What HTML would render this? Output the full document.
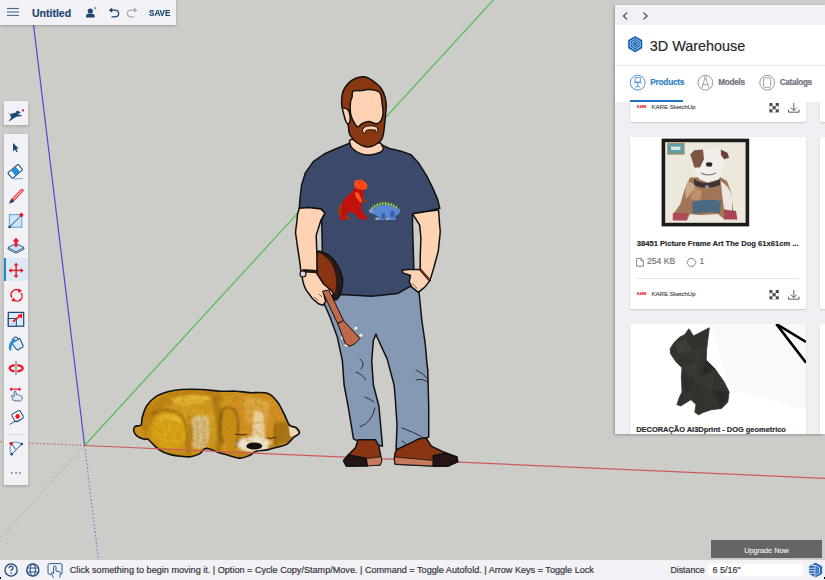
<!DOCTYPE html>
<html><head><meta charset="utf-8">
<style>
*{box-sizing:border-box;margin:0;padding:0}
html,body{width:825px;height:580px;overflow:hidden}
body{position:relative;background:#cccdc8;font-family:"Liberation Sans",sans-serif;color:#333}
.abs{position:absolute}
svg{position:absolute;overflow:visible}
.t{position:absolute;white-space:nowrap;line-height:1;-webkit-text-stroke:0.18px currentColor}
#scene{left:0;top:0}
#topbar{position:absolute;left:0;top:0;width:176px;height:25px;background:#f1f1f6;box-shadow:0 1px 3px rgba(0,0,0,.22)}
.tb{position:absolute;left:4px;width:24px;background:#f1f1f6;box-shadow:0 1px 3px rgba(0,0,0,.22)}
#panel{position:absolute;left:615px;top:5px;width:210px;height:429px;background:#efeff4;box-shadow:-1px 1px 3px rgba(0,0,0,.28);overflow:hidden}
#status{position:absolute;left:0;top:560px;width:825px;height:20px;background:#f1f1f6}
.card{position:absolute;background:#fff;box-shadow:0 1px 2px rgba(0,0,0,.16);border-radius:2px;overflow:hidden}
</style></head>
<body>
<!--SCENE-->
<svg id="scene" width="825" height="580" viewBox="0 0 825 580">
<line x1="30.5" y1="0" x2="84.6" y2="445.5" stroke="#4a4ad4" stroke-width="1.2"/>
<line x1="84.6" y1="445.5" x2="98.5" y2="560" stroke="#6a6ad6" stroke-width="0.95" stroke-dasharray="1.6 2"/>
<line x1="84.6" y1="445.5" x2="493.3" y2="0" stroke="#52bc4e" stroke-width="1.15"/>
<line x1="84.6" y1="445.5" x2="-20" y2="560" stroke="#72c06e" stroke-width="0.9" stroke-dasharray="1.6 2"/>
<line x1="84.6" y1="445.5" x2="0" y2="441.7" stroke="#c86060" stroke-width="1.1" stroke-dasharray="1.6 2"/>
<defs>
<radialGradient id="dg" cx="0.45" cy="0.45" r="0.7"><stop offset="0" stop-color="#d6a024"/><stop offset="0.65" stop-color="#cc9018"/><stop offset="1" stop-color="#a87010"/></radialGradient>
<radialGradient id="hg" cx="0.5" cy="0.4" r="0.6"><stop offset="0" stop-color="#dcaa48"/><stop offset="1" stop-color="#c48a1c"/></radialGradient>
<clipPath id="dogclip"><path d="M141.0 425.1 C142.2 423.6 141.3 420.5 142.3 417.3 C143.3 414.1 144.5 409.1 146.8 405.7 C149.1 402.2 152.2 399.0 155.9 396.6 C159.6 394.2 164.5 392.7 168.8 391.5 C173.1 390.3 176.3 389.8 181.7 389.5 C187.1 389.2 194.8 389.2 201.2 389.5 C207.6 389.8 214.2 390.9 220.0 391.2 C225.8 391.5 230.8 391.0 235.7 391.2 C240.6 391.4 244.2 392.2 249.5 392.6 C254.8 393.0 262.9 391.8 267.5 393.3 C272.1 394.8 274.4 398.2 277.2 401.6 C280.0 405.1 282.0 410.1 284.1 414.0 C286.2 417.9 287.5 422.8 289.6 425.1 C291.7 427.4 294.9 426.4 296.5 427.8 C298.1 429.2 299.8 431.7 299.3 433.3 C298.8 434.9 295.8 435.6 293.7 437.5 C291.6 439.4 289.6 442.8 286.8 444.4 C284.1 446.0 280.4 446.3 277.2 447.2 C274.0 448.1 271.0 449.2 267.5 449.9 C264.0 450.6 259.4 450.4 256.4 451.3 C253.4 452.2 252.2 454.2 249.5 455.4 C246.8 456.5 243.3 458.2 239.9 458.2 C236.5 458.2 232.3 456.3 228.8 455.4 C225.3 454.5 222.8 453.9 219.1 452.7 C215.3 451.5 209.5 448.2 206.3 448.4 C203.1 448.5 202.5 452.2 199.9 453.6 C197.3 455.0 194.0 456.4 190.8 456.8 C187.6 457.2 183.7 456.5 180.5 456.2 C177.3 455.9 174.2 455.5 171.4 454.9 C168.6 454.2 166.2 453.6 163.6 452.3 C161.0 451.0 158.5 449.3 155.9 447.1 C153.3 444.9 150.1 440.6 148.1 439.3 C146.1 438.0 145.9 439.7 144.2 439.3 C142.5 438.9 139.5 438.0 137.8 436.7 C136.1 435.4 134.3 433.3 133.9 431.6 C133.5 429.9 134.0 427.5 135.2 426.4 C136.4 425.3 139.8 426.6 141.0 425.1 Z"/></clipPath>
</defs>
<path d="M141.0 425.1 C142.2 423.6 141.3 420.5 142.3 417.3 C143.3 414.1 144.5 409.1 146.8 405.7 C149.1 402.2 152.2 399.0 155.9 396.6 C159.6 394.2 164.5 392.7 168.8 391.5 C173.1 390.3 176.3 389.8 181.7 389.5 C187.1 389.2 194.8 389.2 201.2 389.5 C207.6 389.8 214.2 390.9 220.0 391.2 C225.8 391.5 230.8 391.0 235.7 391.2 C240.6 391.4 244.2 392.2 249.5 392.6 C254.8 393.0 262.9 391.8 267.5 393.3 C272.1 394.8 274.4 398.2 277.2 401.6 C280.0 405.1 282.0 410.1 284.1 414.0 C286.2 417.9 287.5 422.8 289.6 425.1 C291.7 427.4 294.9 426.4 296.5 427.8 C298.1 429.2 299.8 431.7 299.3 433.3 C298.8 434.9 295.8 435.6 293.7 437.5 C291.6 439.4 289.6 442.8 286.8 444.4 C284.1 446.0 280.4 446.3 277.2 447.2 C274.0 448.1 271.0 449.2 267.5 449.9 C264.0 450.6 259.4 450.4 256.4 451.3 C253.4 452.2 252.2 454.2 249.5 455.4 C246.8 456.5 243.3 458.2 239.9 458.2 C236.5 458.2 232.3 456.3 228.8 455.4 C225.3 454.5 222.8 453.9 219.1 452.7 C215.3 451.5 209.5 448.2 206.3 448.4 C203.1 448.5 202.5 452.2 199.9 453.6 C197.3 455.0 194.0 456.4 190.8 456.8 C187.6 457.2 183.7 456.5 180.5 456.2 C177.3 455.9 174.2 455.5 171.4 454.9 C168.6 454.2 166.2 453.6 163.6 452.3 C161.0 451.0 158.5 449.3 155.9 447.1 C153.3 444.9 150.1 440.6 148.1 439.3 C146.1 438.0 145.9 439.7 144.2 439.3 C142.5 438.9 139.5 438.0 137.8 436.7 C136.1 435.4 134.3 433.3 133.9 431.6 C133.5 429.9 134.0 427.5 135.2 426.4 C136.4 425.3 139.8 426.6 141.0 425.1 Z" fill="url(#dg)"/>
<filter id="bl" x="-20%" y="-20%" width="140%" height="140%"><feGaussianBlur stdDeviation="1.3"/></filter>
<filter id="bl2" x="-20%" y="-20%" width="140%" height="140%"><feGaussianBlur stdDeviation="0.6"/></filter>
<filter id="fur" x="0" y="0" width="100%" height="100%"><feTurbulence type="fractalNoise" baseFrequency="0.22 0.28" numOctaves="3" seed="11"/><feColorMatrix type="matrix" values="0 0 0 0 0.42  0 0 0 0 0.24  0 0 0 0 0.0  0 0 0 -3 1.6"/><feComposite in2="SourceGraphic" operator="in"/></filter>
<filter id="fur2" x="0" y="0" width="100%" height="100%"><feTurbulence type="fractalNoise" baseFrequency="0.25 0.2" numOctaves="2" seed="5"/><feColorMatrix type="matrix" values="0 0 0 0 0.95  0 0 0 0 0.8  0 0 0 0 0.35  0 0 0 3 -1.7"/><feComposite in2="SourceGraphic" operator="in"/></filter>
<g clip-path="url(#dogclip)">
<g filter="url(#bl)">
<path d="M138 420 Q150 398 180 390 Q205 388 222 392 L224 402 Q196 396 170 404 Q150 414 146 440 Z" fill="#b87a0c" opacity="0.75"/>
<path d="M170 398 Q196 392 214 398 Q200 406 176 406 Z" fill="#e4b436" opacity="0.8"/>
<ellipse cx="170" cy="431" rx="18" ry="18" fill="#d8a214"/>
<path d="M160 420 Q170 414 180 422" fill="none" stroke="#eec040" stroke-width="3" opacity="0.7"/>
<path d="M187 416 Q192 436 185 453 L190 455 Q196 436 191 416 Z" fill="#9a640a" opacity="0.5"/>
<path d="M191 420 Q199 412 208 417 Q212 432 207 447 Q198 452 192 446 Q195 432 191 420 Z" fill="#dcc494" opacity="0.85"/>
<path d="M196 420 Q199 432 197 446 M203 418 Q206 432 203 446" fill="none" stroke="#b48a58" stroke-width="1.2" opacity="0.8"/>
<path d="M210 398 Q219 422 215 454 L221 455 Q224 420 219 396 Z" fill="#7a5008" opacity="0.4"/>
<path d="M232 394 Q258 388 278 402 Q290 420 289 440 Q270 452 248 452 Q232 448 230 425 Z" fill="#d08e22"/>
<path d="M244 398 Q260 396 270 404 L266 432 Q258 420 246 424 Z" fill="#dca84a" opacity="0.8"/>
<path d="M254 412 Q259 409 263 414 L265 438 L252 438 Z" fill="#ead0a0"/>
<ellipse cx="254" cy="444.5" rx="18" ry="7.5" fill="#eee2cc"/>
<path d="M221.5 411 Q231 405 236 414 Q238 432 235 448 Q226 449 222 441 Q219 424 221.5 411 Z" fill="#c98c14"/>
<path d="M222 412 Q219 430 223 444" fill="none" stroke="#6a4208" stroke-width="1.6" opacity="0.6"/>
<path d="M276 423 Q288 419 296 428 Q299 438 292 445 Q282 449 276 448 Q272 434 276 423 Z" fill="#a87014"/>
<path d="M268 444 L286 441 L286 448 L268 450 Z" fill="#b88420" opacity="0.8"/>
</g>
<filter id="bl3" x="-20%" y="-20%" width="140%" height="140%"><feGaussianBlur stdDeviation="0.9"/></filter>
<g filter="url(#bl3)" fill="none" stroke-linecap="round">
<path d="M152 414 Q166 406 180 414 Q190 426 186 446" stroke="#7a4c08" stroke-width="1.8" opacity="0.7"/>
<path d="M158 418 Q170 412 180 420" stroke="#f2c848" stroke-width="2" opacity="0.6"/>
<path d="M221 410 Q231 403 237 414 Q240 432 236 448" stroke="#5e3c06" stroke-width="1.8" opacity="0.7"/>
<path d="M222 411 Q218 426 221 442" stroke="#5e3c06" stroke-width="1.6" opacity="0.6"/>
<path d="M276 422 Q273 436 277 448" stroke="#6a4406" stroke-width="1.6" opacity="0.6"/>
<path d="M176 400 Q196 394 212 400" stroke="#f0c448" stroke-width="2.4" opacity="0.55"/>
<path d="M244 404 Q256 398 270 406" stroke="#e8b860" stroke-width="2" opacity="0.6"/>
</g>
<rect x="130" y="385" width="175" height="80" filter="url(#fur)" opacity="0.4"/>
<rect x="130" y="385" width="175" height="80" filter="url(#fur2)" opacity="0.18"/>
<g filter="url(#bl2)">
<path d="M288.5 426 Q296 427 298.6 433 Q296 437 290 436.5 Z" fill="#e8d8b8"/>
<ellipse cx="254.3" cy="446" rx="8" ry="3.6" fill="#141010"/>
</g>
<path d="M235 434.2 Q241 435.8 247 434.2" fill="none" stroke="#3a2808" stroke-width="1"/>
<path d="M266.6 437.8 Q271 439 275.6 437.4" fill="none" stroke="#3a2808" stroke-width="1"/>
</g>
<path d="M141.0 425.1 C142.2 423.6 141.3 420.5 142.3 417.3 C143.3 414.1 144.5 409.1 146.8 405.7 C149.1 402.2 152.2 399.0 155.9 396.6 C159.6 394.2 164.5 392.7 168.8 391.5 C173.1 390.3 176.3 389.8 181.7 389.5 C187.1 389.2 194.8 389.2 201.2 389.5 C207.6 389.8 214.2 390.9 220.0 391.2 C225.8 391.5 230.8 391.0 235.7 391.2 C240.6 391.4 244.2 392.2 249.5 392.6 C254.8 393.0 262.9 391.8 267.5 393.3 C272.1 394.8 274.4 398.2 277.2 401.6 C280.0 405.1 282.0 410.1 284.1 414.0 C286.2 417.9 287.5 422.8 289.6 425.1 C291.7 427.4 294.9 426.4 296.5 427.8 C298.1 429.2 299.8 431.7 299.3 433.3 C298.8 434.9 295.8 435.6 293.7 437.5 C291.6 439.4 289.6 442.8 286.8 444.4 C284.1 446.0 280.4 446.3 277.2 447.2 C274.0 448.1 271.0 449.2 267.5 449.9 C264.0 450.6 259.4 450.4 256.4 451.3 C253.4 452.2 252.2 454.2 249.5 455.4 C246.8 456.5 243.3 458.2 239.9 458.2 C236.5 458.2 232.3 456.3 228.8 455.4 C225.3 454.5 222.8 453.9 219.1 452.7 C215.3 451.5 209.5 448.2 206.3 448.4 C203.1 448.5 202.5 452.2 199.9 453.6 C197.3 455.0 194.0 456.4 190.8 456.8 C187.6 457.2 183.7 456.5 180.5 456.2 C177.3 455.9 174.2 455.5 171.4 454.9 C168.6 454.2 166.2 453.6 163.6 452.3 C161.0 451.0 158.5 449.3 155.9 447.1 C153.3 444.9 150.1 440.6 148.1 439.3 C146.1 438.0 145.9 439.7 144.2 439.3 C142.5 438.9 139.5 438.0 137.8 436.7 C136.1 435.4 134.3 433.3 133.9 431.6 C133.5 429.9 134.0 427.5 135.2 426.4 C136.4 425.3 139.8 426.6 141.0 425.1 Z" fill="none" stroke="#111" stroke-width="1.6" stroke-linejoin="round"/>
<line x1="84.6" y1="445.5" x2="825" y2="478.4" stroke="#cc5c5c" stroke-width="1.2"/>
<path d="M322.8 300.5 L330.3 317.8 L337.2 336.7 L342.4 360.9 L344.1 385.0 L348.1 406.2 L353.5 438.8 L360.0 442.0 L382.5 446.0 L378.9 406.2 L373.4 385.0 L371.7 360.9 L373.4 340.2 L376.0 334.1 L376.9 336.7 L387.2 359.1 L394.1 385.0 L395.2 397.2 L397.0 424.3 L396.1 449.7 L428.7 437.0 L428.7 406.2 L427.8 370.0 L426.9 362.6 L425.2 343.6 L421.7 319.5 L419.1 292.8 L418.0 286.0 L360.0 286.0 Z" fill="#8599b5" stroke="#111" stroke-width="1.5" stroke-linejoin="round"/>
<g fill="none" stroke="#111" stroke-width="0.8" stroke-linecap="round"><path d="M360 359 Q366 364 361 369"/><path d="M356 372 Q362 374 366 380"/><path d="M416 370 Q423 373 428 379"/><path d="M416 380 Q422 378 428 382"/><path d="M375 408 Q372 422 360 427"/><path d="M402 428 Q414 432 424 438"/><path d="M402 441 Q408 444 406 448"/><path d="M365 397 Q370 399 374 402"/></g>
<path d="M358.1 439.7 L375.3 439.7 L378.9 446.1 L381.6 460.6 L379.8 465.1 L346.3 466.0 L343.6 460.6 L348.1 455.1 L355.4 447.9 Z" fill="#8a3511" stroke="#111" stroke-width="1.5" stroke-linejoin="round"/>
<path d="M366.2 458.6 L381.4 456.8 L381.6 462.0 L379.8 465.1 L367.1 466.0 Z" fill="#c77a5c" stroke="#111" stroke-width="0.8"/>
<path d="M343.6 460.6 L348.1 455.1 L357.0 456.6 L366.2 458.6 L367.1 466.0 L346.3 466.0 Z" fill="#261516" stroke="#111" stroke-width="1.5" stroke-linejoin="round"/>
<path d="M397.0 449.7 L418.8 438.8 L426.0 437.9 L431.4 446.1 L442.3 451.5 L456.8 457.0 L457.7 461.5 L447.8 466.0 L433.3 466.0 L395.2 464.2 L394.3 458.8 L395.2 452.4 Z" fill="#8a3511" stroke="#111" stroke-width="1.5" stroke-linejoin="round"/>
<path d="M394.3 457.0 L433.3 460.4 L433.3 466.0 L395.2 464.2 Z" fill="#c77a5c" stroke="#111" stroke-width="0.8"/>
<path d="M433.3 455.4 L445.0 453.6 L456.8 457.0 L457.7 461.5 L447.8 466.0 L433.3 466.0 Z" fill="#261516" stroke="#111" stroke-width="1.5" stroke-linejoin="round"/>
<path d="M350.1 143.0 L343.6 145.6 L336.6 148.5 L324.2 154.0 L313.3 161.7 L305.5 172.6 L301.6 185.0 L300.1 197.5 L299.3 208.3 L308.6 207.5 L321.0 209.1 L324.9 213.0 L321.7 220.0 L322.4 253.0 L325.0 290.0 L334.5 295.7 L340.7 294.5 L371.7 296.2 L397.6 293.6 L407.9 287.6 L411.8 286.0 L413.8 267.7 L413.1 244.4 L412.5 225.0 L412.6 213.8 L426.6 211.4 L439.8 208.3 L437.5 199.0 L432.8 188.1 L426.6 175.7 L418.8 163.3 L411.1 154.8 L400.2 150.9 L389.3 148.5 L383.3 145.6 L379.8 143.0 Z" fill="#3b4a6b" stroke="#111" stroke-width="1.5" stroke-linejoin="round"/>
<path d="M342.5 201.4 L339.1 206.5 L337.8 211.6 L339.9 216.7 L345 218.8 L351.8 220.1 L347.6 215.9 L343.3 213.3 L341.6 208.2 Z" fill="#a43a0c"/>
<path d="M354.4 187.9 L362.8 188.7 L363.7 193 L363.3 198.1 L362 204 L361.1 209.9 L363.7 213.3 L367.1 217.6 L367.1 219.7 L359.4 219.3 L355.2 214.2 L350.1 211.6 L346.7 214.2 L345 220.1 L339.9 220.5 L341.6 209.9 L342.5 201.4 L346.7 196.4 L351.8 192.1 Z" fill="#c0120a"/>
<path d="M355.2 180.7 L361.1 179.8 L365.4 182.4 L367.1 185.3 L366.7 188.7 L362 189.6 L355.6 187.9 L354.4 184.5 Z" fill="#ff4a12" stroke="#ff4a12" stroke-width="0.6" stroke-linejoin="round"/>
<circle cx="359.4" cy="182.8" r="0.6" fill="#8a1a08"/>
<path d="M354.8 192.1 L358.6 193 L362 200.6 L361.6 203.1 L359.4 201.4 L355.6 196.4 Z" fill="#ff5a1a"/>
<path d="M363.3 198.9 L366.2 200.6 L367.5 202.3 L366.2 202.7 L363.7 201 Z" fill="#a43a0c"/>
<path d="M369.6 209.9 L374.7 205.7 L384.9 203.6 L393.4 205.3 L397.2 208.7 L399.3 208.7 L399.7 207.4 L400.2 211.6 L397.6 215 L395.1 215.9 L395.9 220.1 L389.1 220.1 L388.3 216.7 L384.9 217.6 L384 220.1 L379.8 220.1 L379 216.7 L373.9 214.2 L369.6 212.5 Z" fill="#5a86d6"/>
<path d="M370.5 209.4 L372.2 205.4 L373.9 209.4 Z" fill="#4a8a3a"/><path d="M371.3 208.8 L372.2 206.6 L373.1 208.8 Z" fill="#e8e850"/><path d="M372.9 207.6 L374.6 203.6 L376.3 207.6 Z" fill="#4a8a3a"/><path d="M373.7 207.0 L374.6 204.8 L375.5 207.0 Z" fill="#e8e850"/><path d="M375.5 206.2 L377.2 202.2 L378.9 206.2 Z" fill="#4a8a3a"/><path d="M376.3 205.6 L377.2 203.4 L378.1 205.6 Z" fill="#e8e850"/><path d="M378.3 205.3 L380.0 201.3 L381.7 205.3 Z" fill="#4a8a3a"/><path d="M379.1 204.7 L380.0 202.5 L380.9 204.7 Z" fill="#e8e850"/><path d="M381.1 204.7 L382.8 200.7 L384.5 204.7 Z" fill="#4a8a3a"/><path d="M381.9 204.1 L382.8 201.9 L383.7 204.1 Z" fill="#e8e850"/><path d="M383.9 204.6 L385.6 200.6 L387.3 204.6 Z" fill="#4a8a3a"/><path d="M384.7 204.0 L385.6 201.8 L386.5 204.0 Z" fill="#e8e850"/><path d="M386.7 205.0 L388.4 201.0 L390.1 205.0 Z" fill="#4a8a3a"/><path d="M387.5 204.4 L388.4 202.2 L389.3 204.4 Z" fill="#e8e850"/><path d="M389.5 205.8 L391.2 201.8 L392.9 205.8 Z" fill="#4a8a3a"/><path d="M390.3 205.2 L391.2 203.0 L392.1 205.2 Z" fill="#e8e850"/><path d="M392.1 207.0 L393.8 203.0 L395.5 207.0 Z" fill="#4a8a3a"/><path d="M392.9 206.4 L393.8 204.2 L394.7 206.4 Z" fill="#e8e850"/><path d="M394.5 208.8 L396.2 204.8 L397.9 208.8 Z" fill="#4a8a3a"/><path d="M395.3 208.2 L396.2 206.0 L397.1 208.2 Z" fill="#e8e850"/>
<ellipse cx="392.5" cy="214" rx="2.2" ry="3.6" fill="#3d62a8"/><ellipse cx="383.2" cy="216" rx="2" ry="3" fill="#3d62a8"/>
<path d="M375.6 217.6 L379 217.6 L379.4 220.1 L375.2 220.1 Z M385.7 217.6 L389.1 217.6 L389.5 220.1 L385.3 220.1 Z" fill="#98a6c0"/>
<path d="M368.8 209.6 L372.4 208.8 L373.9 212.5 L369.2 212.6 Z" fill="#8a9cc0"/>
<path d="M323.1 252.4 C325.5 253.1 328.5 254.7 331.0 257.0 C333.5 259.3 336.1 262.5 338.0 266.0 C339.9 269.5 341.8 274.2 342.4 277.9 C343.0 281.6 342.7 284.5 341.9 288.0 C341.1 291.5 339.3 296.9 337.5 298.7 C335.7 300.5 333.6 300.4 331.0 299.0 C328.4 297.6 324.3 293.8 322.0 290.0 C319.7 286.2 317.9 282.1 317.0 276.0 C316.1 269.9 315.9 257.0 316.9 253.1 C317.9 249.2 320.8 251.8 323.1 252.4 Z" fill="#2b1a17" stroke="#111" stroke-width="1.5" stroke-linejoin="round"/>
<path d="M318.0 253.5 C319.6 251.6 324.5 256.2 327.0 258.5 C329.5 260.8 331.5 263.6 333.0 267.0 C334.5 270.4 335.7 274.8 336.0 279.0 C336.3 283.2 336.0 289.5 335.0 292.0 C334.0 294.5 332.3 295.3 330.0 294.0 C327.7 292.7 323.1 288.0 321.0 284.0 C318.9 280.0 318.0 275.1 317.5 270.0 C317.0 264.9 316.4 255.4 318.0 253.5 Z" fill="#8a3511"/>
<path d="M299.3 208.3 L297.5 214.0 L297.0 220.0 L295.5 232.4 L297.6 247.6 L299.7 261.4 L301.0 272.4 L303.8 284.8 L306.0 289.9 L312.6 298.7 L318.4 303.8 L322.8 305.3 L325.7 301.6 L323.6 293.0 L328.7 294.8 L333.8 296.0 L332.3 291.4 L323.6 284.0 L317.0 273.8 L316.9 254.5 L316.2 235.2 L321.0 220.0 L324.9 213.0 L321.0 209.1 L308.6 207.5 Z" fill="#fdd3b3" stroke="#111" stroke-width="1.5" stroke-linejoin="round"/>
<path d="M303.5 270.8 L316.6 271.6" stroke="#241716" stroke-width="3.4" stroke-linecap="round"/>
<circle cx="303" cy="274" r="3" fill="#d8d8d8" stroke="#1a1a1a" stroke-width="1.2"/>
<path d="M314 297 L318.5 301 M319 294 L322 297" stroke="#111" stroke-width="0.6" fill="none"/>
<path d="M322.4 291.2 L328.8 290.0 L343.6 320.6 L337.6 323.6 Z" fill="#c0684a" stroke="#111" stroke-width="1"/>
<circle cx="355.8" cy="328.2" r="2.2" fill="#e8e8e8" stroke="#666" stroke-width="0.6"/>
<circle cx="361" cy="335.2" r="2.2" fill="#e8e8e8" stroke="#666" stroke-width="0.6"/>
<circle cx="342.4" cy="337.8" r="2.2" fill="#e8e8e8" stroke="#666" stroke-width="0.6"/>
<circle cx="346.2" cy="345" r="2.2" fill="#e8e8e8" stroke="#666" stroke-width="0.6"/>
<path d="M337.6 323.6 L343.6 320.6 L360.0 338.6 L355.0 343.6 L350.0 346.2 L345.4 343.6 Z" fill="#c0684a" stroke="#111" stroke-width="1"/>
<path d="M412.6 213.8 L419.6 225.0 L420.9 237.9 L420.2 257.3 L420.2 269.4 L407.9 269.4 L402.1 270.3 L402.8 272.9 L410.5 275.5 L409.2 281.9 L411.8 287.1 L418.3 292.3 L424.8 287.1 L429.9 280.6 L433.8 267.7 L438.3 250.9 L440.3 231.5 L439.6 225.0 L438.6 210.0 L426.6 211.4 Z" fill="#fdd3b3" stroke="#111" stroke-width="1.5" stroke-linejoin="round"/>
<path d="M420.4 269.8 L429.6 280.2" stroke="#111" stroke-width="2.4" stroke-linecap="round"/><path d="M420.6 269.9 L429.4 280" stroke="#9a1c1c" stroke-width="1.2" stroke-linecap="round"/>
<path d="M415 286 L417 288.5 M412.5 283.5 L414.5 286" stroke="#111" stroke-width="0.6" fill="none"/>
<path d="M351.4 139.6 C348.1 140.1 350.0 142.5 350.1 143.9 C350.2 145.3 350.6 146.6 352.2 148.2 C353.8 149.8 357.1 152.2 360.0 153.4 C362.9 154.6 366.2 155.2 369.5 155.1 C372.8 154.9 377.5 153.5 379.8 152.5 C382.1 151.5 383.0 150.4 383.3 149.1 C383.6 147.8 382.2 145.8 381.6 144.8 C381.0 143.8 381.7 143.6 379.8 143.0 C377.9 142.4 374.7 141.6 370.0 141.0 C365.3 140.4 354.7 139.1 351.4 139.6 Z" fill="#fdd3b3" stroke="#111" stroke-width="1.5" stroke-linejoin="round"/>
<path d="M364.0 76.7 C366.8 77.0 369.4 78.5 372.2 80.3 C374.9 82.1 378.4 84.9 380.5 87.5 C382.6 90.1 383.7 93.0 384.6 95.8 C385.6 98.6 386.0 101.2 386.2 104.1 C386.4 107.0 385.9 110.7 385.7 113.4 C385.5 116.2 385.3 118.0 385.0 120.6 C384.7 123.2 384.5 126.3 384.1 129.2 C383.7 132.1 383.4 135.6 382.4 137.9 C381.4 140.2 380.0 141.6 378.1 143.0 C376.2 144.4 373.5 145.9 371.2 146.5 C368.9 147.1 366.6 147.1 364.3 146.5 C362.0 145.9 359.4 144.4 357.4 143.0 C355.4 141.6 353.6 139.6 352.2 137.9 C350.8 136.2 349.9 135.0 349.2 132.7 C348.5 130.4 349.1 128.2 347.9 124.1 C346.7 120.0 343.2 112.4 342.2 108.2 C341.2 104.0 341.5 101.8 341.7 98.9 C341.9 96.0 342.2 93.2 343.3 90.6 C344.4 88.0 346.3 85.5 348.4 83.4 C350.5 81.3 353.1 79.3 355.7 78.2 C358.3 77.1 361.2 76.4 364.0 76.7 Z" fill="#8a3811" stroke="#111" stroke-width="1.5" stroke-linejoin="round"/>
<path d="M342.8 108.2 C342.1 109.1 343.7 113.8 344.2 116.0 C344.7 118.2 345.3 120.2 346.0 121.5 C346.7 122.8 347.9 124.4 348.6 124.0 C349.3 123.6 350.2 121.2 350.2 119.0 C350.2 116.8 349.7 112.3 348.5 110.5 C347.3 108.7 343.5 107.3 342.8 108.2 Z" fill="#fdd3b3" stroke="#111" stroke-width="1.5" stroke-linejoin="round"/>
<path d="M353.1 91.1 C354.6 90.1 358.4 90.8 360.9 90.6 C363.4 90.3 365.5 89.6 368.1 89.6 C370.7 89.6 374.3 89.9 376.4 90.6 C378.5 91.3 379.6 91.6 380.5 93.7 C381.4 95.8 381.7 99.7 382.1 103.0 C382.5 106.3 383.3 110.5 383.1 113.4 C382.9 116.3 382.1 118.9 381.0 120.6 C379.9 122.3 378.4 123.5 376.4 123.7 C374.4 123.9 371.5 121.6 369.1 121.6 C366.7 121.6 363.8 122.8 361.9 123.7 C360.0 124.6 359.2 127.2 357.8 126.8 C356.4 126.4 354.8 123.8 353.6 121.6 C352.4 119.4 351.0 116.7 350.5 113.4 C350.0 110.1 350.2 104.8 350.5 102.0 C350.8 99.2 351.7 98.6 352.1 96.8 C352.5 95.0 351.6 92.1 353.1 91.1 Z" fill="#fdd3b3" stroke="#111" stroke-width="1.5" stroke-linejoin="round"/>
<path d="M362.6 129.2 L366.0 126.2 L372.1 125.8 L377.2 127.1 L378.1 131.8 L376.4 132.7 L375.5 130.1 L369.5 129.7 L366.0 130.5 L364.7 133.6 L362.6 131.8 Z" fill="#fdd3b3" stroke="#111" stroke-width="1" stroke-linejoin="round"/>
</svg>
<!--/SCENE-->

<!--TOPBAR-->
<div id="topbar">
  <svg width="176" height="25" style="left:0;top:0">
    <g stroke="#4d6b8c" stroke-width="1.1">
      <line x1="7" y1="8.5" x2="19" y2="8.5"/><line x1="7" y1="12" x2="19" y2="12"/><line x1="7" y1="15.4" x2="19" y2="15.4"/>
    </g>
    <circle cx="90.3" cy="11" r="2.6" fill="#1b4573"/>
    <path d="M86 17.6 V15.8 Q86 13.8 88.5 13.8 H92.2 Q94.6 13.8 94.6 15.8 V17.6 Z" fill="#1b4573"/>
    <circle cx="95.2" cy="8.2" r="1.1" fill="#3aa6e6"/>
    <path d="M110.5 10.2 H114.5 Q118.7 10.2 118.7 13.5 Q118.7 16.8 114.5 16.8 H111.5" fill="none" stroke="#1b4573" stroke-width="1.2"/>
    <path d="M108.8 10.2 L112.2 7.6 L112.2 12.8 Z" fill="#1b4573"/>
    <path d="M135.5 10.2 H131.5 Q127.4 10.2 127.4 13.5 Q127.4 16.8 131.5 16.8 H134.5" fill="none" stroke="#a9adb8" stroke-width="1.2"/>
    <path d="M137.4 10.2 L134 7.6 L134 12.8 Z" fill="#a9adb8"/>
  </svg>
  <div class="t navy" style="left:32px;top:7.5px;font-size:10.5px;font-weight:bold;color:#1b4573">Untitled</div>
  <div class="t" style="left:149px;top:7.9px;font-size:9.5px;font-weight:bold;color:#1b4573;transform:scaleX(0.85);transform-origin:0 0">SAVE</div>
</div>
<!--/TOPBAR-->

<!--LEFTTOOLS-->
<div class="tb" style="top:101px;height:24px"></div>
<div class="tb" style="top:134px;height:351px"></div>
<div class="abs" style="left:4px;top:258px;width:24px;height:23px;background:#dce8f4"></div>
<div class="abs" style="left:4px;top:258px;width:2px;height:23px;background:#1a8bd8"></div>
<svg width="40" height="500" style="left:0;top:0">
  <!-- dog -->
  <path d="M8.2 111.2 L10.4 114.4 Q11.5 113.4 13.4 113.3 L16.6 112.2 L16.2 110.7 L18.3 111.1 L20.9 112.5 L18.9 113.6 L17.9 114.5 L21.6 115 L21.4 116.2 L17.1 116.5 L14.2 118 L11.2 120.1 L8.6 121.4 L9.2 120.1 L11.3 117.8 L10.8 116.6 Z" fill="#1b4573"/>
  <circle cx="23" cy="110.4" r="1.1" fill="#f0141e"/>
  <!-- select -->
  <path d="M13 143 L13 151.2 L15 149.4 L16.5 152.2 L17.7 151.6 L16.3 148.8 L18.7 148.6 Z" fill="#1b4573"/>
  <!-- eraser -->
  <g transform="translate(15.2 171.4) rotate(-40)">
    <rect x="-6.8" y="-3.6" width="13.6" height="7.2" rx="1" fill="#fff" stroke="#1b4573" stroke-width="1.1"/>
    <rect x="-2.6" y="-3.1" width="6" height="6.2" fill="#1e90d8"/>
  </g>
  <line x1="13" y1="178.6" x2="23" y2="178.6" stroke="#7fb8e6" stroke-width="1.2"/>
  <!-- pencil -->
  <path d="M12.2 199.2 L21.2 189.8 Q22.6 189 23.3 190.4 L14 200.2 Z" fill="#fff" stroke="#f0282e" stroke-width="1.1"/>
  <path d="M9 203.8 L11.2 198.6 L14.6 201.4 Z" fill="#1b4573"/>
  <!-- rectangle -->
  <rect x="9.4" y="214.6" width="12.4" height="12.6" fill="#cfe4f6" stroke="#5aa6dc" stroke-width="1"/>
  <line x1="9.6" y1="227" x2="21.5" y2="215" stroke="#1b4573" stroke-width="1"/>
  <circle cx="21.4" cy="215" r="1.9" fill="#f0141e"/>
  <circle cx="9.6" cy="227" r="1.3" fill="#1b4573"/>
  <!-- push pull -->
  <path d="M8 247.5 L16 243.5 L24 247.5 L24 249 L16 253.2 L8 249 Z" fill="#cfe4f6" stroke="#1b4573" stroke-width="0.9" stroke-linejoin="round"/>
  <path d="M8 247.5 L16 251.6 L24 247.5" fill="none" stroke="#1b4573" stroke-width="0.7"/>
  <path d="M16 237.8 L19.4 241.6 L17.3 241.6 L17.3 247 L14.7 247 L14.7 241.6 L12.6 241.6 Z" fill="#f0141e"/>
  <!-- move -->
  <g fill="#f0141e">
    <path d="M16.1 262.8 L18.6 265.6 L13.6 265.6 Z M16.1 278 L18.6 275.2 L13.6 275.2 Z M8.6 270.4 L11.4 267.9 L11.4 272.9 Z M23.6 270.4 L20.8 267.9 L20.8 272.9 Z"/>
  </g>
  <g stroke="#f0141e" stroke-width="1.4">
    <line x1="16.1" y1="265" x2="16.1" y2="276"/><line x1="11" y1="270.4" x2="21.2" y2="270.4"/>
  </g>
  <!-- rotate -->
  <path d="M12 297.5 A5 5 0 0 1 19.5 291" fill="none" stroke="#f0141e" stroke-width="1.4"/>
  <path d="M21 293 A5 5 0 0 1 13.5 299.6" fill="none" stroke="#f0141e" stroke-width="1.4"/>
  <path d="M18.3 288.6 L22 290.6 L18.6 293.2 Z M14.6 302 L11 300 L14.4 297.4 Z" fill="#f0141e"/>
  <!-- scale -->
  <rect x="8.3" y="312.4" width="15.4" height="13.8" fill="#dcebf8" stroke="#1b4573" stroke-width="1.2"/>
  <rect x="8.3" y="318.5" width="8" height="7.7" fill="#cfe4f6" stroke="#1b4573" stroke-width="1"/>
  <path d="M13 321.6 L20.2 315.6" stroke="#f0141e" stroke-width="1.8"/>
  <path d="M22.4 313.6 L21.8 318.8 L17.6 315 Z" fill="#f0141e"/>
  <!-- paint bucket -->
  <g transform="translate(17.5 343.6) rotate(-30)">
    <path d="M-4.6 -3.4 L4.6 -3.4 L3.8 4.6 Q3.6 5.6 2.6 5.6 L-2.6 5.6 Q-3.6 5.6 -3.8 4.6 Z" fill="#dcebf8" stroke="#1b4573" stroke-width="1"/>
    <path d="M-3 -3.4 Q-3 -7 0 -7 Q3 -7 3 -3.4" fill="none" stroke="#1b4573" stroke-width="0.9"/>
  </g>
  <path d="M9 349.5 Q8 344 12 340 Q14.5 338 16 339.8 L12.4 344.6 Q10.8 347 11.2 351 Z" fill="#1e90d8"/>
  <!-- orbit -->
  <ellipse cx="16.2" cy="368.3" rx="6.6" ry="3.2" fill="none" stroke="#f0141e" stroke-width="2.2"/>
  <line x1="16" y1="361" x2="16" y2="375" stroke="#e8eef6" stroke-width="2.6"/>
  <line x1="16" y1="361" x2="16" y2="375" stroke="#4d6b8c" stroke-width="1"/>
  <!-- pan -->
  <line x1="10.8" y1="389.2" x2="20" y2="389.2" stroke="#f0141e" stroke-width="1.2"/>
  <path d="M9.4 389.2 L12 387.2 L12 391.2 Z M21.4 389.2 L18.8 387.2 L18.8 391.2 Z" fill="#f0141e"/>
  <path d="M13.4 400.6 L11.6 396.4 Q11.2 395 12.6 395.4 L14 397 L14 391.6 Q15 390.4 16 391.6 L16 394.6 Q17.4 393.8 18.2 395 Q19.6 394.6 20.2 395.8 Q21.8 395.6 22.2 397.2 L22 399.2 Q21.2 401 20.4 401 Z" fill="#dcebf8" stroke="#4d6b8c" stroke-width="0.9"/>
  <!-- tape -->
  <g transform="translate(17.6 416.2) rotate(-30)">
    <rect x="-4.8" y="-4.4" width="9.6" height="8.8" rx="1.8" fill="#fff" stroke="#1b4573" stroke-width="1"/>
  </g>
  <circle cx="17.6" cy="416.4" r="2.3" fill="#f0141e"/>
  <path d="M9.6 424.4 L14.4 421.6 L18 421" fill="none" stroke="#1b4573" stroke-width="0.9"/>
  <!-- separator -->
  <line x1="6" y1="434.5" x2="26" y2="434.5" stroke="#d6d7df" stroke-width="1"/>
  <!-- protractor -->
  <path d="M11.2 443.5 Q16 440.6 21.8 444" fill="none" stroke="#5fb0e8" stroke-width="1.3"/>
  <path d="M11.2 443.5 Q8.6 449 11.7 454.3" fill="none" stroke="#5fb0e8" stroke-width="1.3"/>
  <line x1="11.7" y1="454.3" x2="21.8" y2="444" stroke="#1b4573" stroke-width="0.9"/>
  <line x1="11.2" y1="443.5" x2="15.8" y2="449.5" stroke="#1b4573" stroke-width="0.9"/>
  <circle cx="11.2" cy="443.5" r="1.8" fill="#f0141e"/>
  <circle cx="21.8" cy="444" r="1.3" fill="#1b4573"/>
  <circle cx="11.7" cy="454.3" r="1.3" fill="#1b4573"/>
  <!-- dots -->
  <g fill="#4d6b8c"><rect x="11" y="472.2" width="1.5" height="1.5"/><rect x="15.3" y="472.2" width="1.5" height="1.5"/><rect x="19.2" y="472.2" width="1.5" height="1.5"/></g>
</svg>
<!--/LEFTTOOLS-->

<!--PANEL-->
<div id="panel"></div>
<div class="abs" style="left:615px;top:5px;width:210px;height:20px;background:#f1f1f6"></div>
<div class="abs" style="left:615px;top:25px;width:210px;height:76.5px;background:#fff"></div>
<div class="abs" style="left:615px;top:64.6px;width:210px;height:1.4px;background:#e9e9ef"></div>
<svg width="210" height="100" style="left:615px;top:0">
  <path d="M12.2 12.6 L8.4 16 L12.2 19.4" fill="none" stroke="#3a3a40" stroke-width="1.1"/>
  <path d="M28.4 12.6 L32.2 16 L28.4 19.4" fill="none" stroke="#3a3a40" stroke-width="1.1"/>
  <g transform="translate(20.2 44.2)">
    <path d="M0 -7.8 L6.75 -3.9 L6.75 3.9 L0 7.8 L-6.75 3.9 L-6.75 -3.9 Z" fill="#0b5cb2" stroke="#0b5cb2" stroke-width="0.6" stroke-linejoin="round"/>
    <path d="M0 -5.7 L4.95 -2.85 L4.95 2.85 L0 5.7 L-4.95 2.85 L-4.95 -2.85 Z" fill="none" stroke="#fff" stroke-width="0.65"/>
    <circle r="3.3" fill="none" stroke="#fff" stroke-width="0.6"/>
    <circle r="1.5" fill="none" stroke="#fff" stroke-width="0.5" opacity="0.8"/>
  </g>
  <!-- tab icons -->
  <circle cx="22.7" cy="82.7" r="7.4" fill="none" stroke="#3b86cc" stroke-width="0.9"/>
  <g fill="none" stroke="#3b86cc" stroke-width="0.8">
    <path d="M20 77.6 H25.4 V82 H20 Z"/><path d="M18.8 82.6 H26.6"/><path d="M22.7 83 V86.4 M20.2 87.2 L22.7 86.4 L25.2 87.2"/>
  </g>
  <circle cx="90.4" cy="82.7" r="7.4" fill="none" stroke="#8b8b94" stroke-width="0.9"/>
  <g fill="none" stroke="#8b8b94" stroke-width="0.8">
    <circle cx="90.4" cy="77.6" r="1.1"/><path d="M89.8 78.6 L86.8 88 M91 78.6 L94 88 M87.8 84.6 H93"/>
  </g>
  <circle cx="152.2" cy="82.7" r="7.4" fill="none" stroke="#8b8b94" stroke-width="0.9"/>
  <g fill="none" stroke="#8b8b94" stroke-width="0.8">
    <rect x="148.6" y="77.8" width="7" height="9.6" rx="1"/><path d="M148 80 H149.4 M148 85 H149.4"/>
  </g>
</svg>
<div class="t" style="left:649.8px;top:39.11px;font-size:14.4px;color:#25282c">3D Warehouse</div>
<div class="t" style="left:650.3px;top:78.54px;font-size:8.2px;font-weight:bold;color:#2f7fc6;letter-spacing:-0.2px">Products</div>
<div class="t" style="left:718.2px;top:78.54px;font-size:8.2px;font-weight:bold;color:#707078;letter-spacing:-0.25px">Models</div>
<div class="t" style="left:779.7px;top:78.54px;font-size:8.2px;font-weight:bold;color:#707078;letter-spacing:-0.3px">Catalogs</div>
<div class="abs" style="left:630px;top:100px;width:53.3px;height:2px;background:#1f74c2"></div>
<div class="abs" style="left:615px;top:101.5px;width:210px;height:332.5px;overflow:hidden"><div class="card" style="left:15.4px;top:-151.8px;width:175.3px;height:172px"><div class="abs" style="left:6px;top:141.3px;width:162.6px;height:1.4px;background:#e6e6ec"></div>
<div class="t" style="left:6.6px;top:156.22px;font-size:3.2px;color:#e83030;font-weight:bold;letter-spacing:0.15px">KARE</div>
<div class="t" style="left:21.2px;top:154.17px;font-size:6.2px;color:#56565c;letter-spacing:-0.12px">KARE SketchUp</div>
<svg width="176" height="20" style="left:0;top:150px">
  <rect x="139.4" y="3" width="9.4" height="9.4" fill="#4b4b55"/>
  <g fill="#fff"><rect x="142.5" y="3" width="3.2" height="3.1"/><rect x="139.4" y="6.1" width="3.1" height="3.2"/><rect x="145.7" y="6.1" width="3.1" height="3.2"/><rect x="142.5" y="9.3" width="3.2" height="3.1"/></g>
  <path d="M163.8 3 V10.4 M160.8 7.6 L163.8 10.6 L166.8 7.6" fill="none" stroke="#5a5a62" stroke-width="1"/>
  <path d="M158.6 9.6 V12.2 H169 V9.6" fill="none" stroke="#5a5a62" stroke-width="1"/>
</svg></div>
<div class="card" style="left:205.3px;top:-151.8px;width:175.3px;height:172px"></div>
<div class="card" style="left:15.4px;top:35.0px;width:175.3px;height:172px"><svg width="176" height="92" style="left:0;top:0">
  <defs><filter id="pb" x="-10%" y="-10%" width="120%" height="120%"><feGaussianBlur stdDeviation="0.6"/></filter></defs>
  <rect x="33.4" y="3.4" width="84" height="84.2" fill="#ece9dc" stroke="#1c1a1a" stroke-width="3.6"/>
  <g filter="url(#pb)">
  <rect x="37.2" y="5.8" width="17.4" height="11.8" fill="#a88a60"/>
  <rect x="38.2" y="6.8" width="15.4" height="9.6" fill="#5e9ea4"/>
  <rect x="41" y="9.6" width="9.4" height="3.4" fill="#dbe6e2"/>
  <path d="M60 40.5 L54.7 52.1 L50.4 67 L44 76 L42.8 82 L57 83 L60 77 L70 78 L88 77 L94 82 L107 82 L103 72 L101.4 56 L97 44 L90 40 Z" fill="#a07458"/><path d="M64 50 L72 54 L70 64 L60 62 Z" fill="#c0906a"/>
  <path d="M62 65 Q76 61 91 64 L90 76 Q76 74 63 77 Z" fill="#4a6a80"/>
  <path d="M90.8 44 Q100 50 102.4 60 L102 74 L94 72 Q92 58 90.8 44 Z" fill="#efe6e0"/>
  <path d="M58 44 Q54 52 56 62 Q62 56 66 48 Z" fill="#c8a888"/>
  <path d="M64 42 Q76 50 90 42 L90 48 Q76 54 64 48 Z" fill="#3c3038"/>
  <circle cx="77" cy="50" r="2" fill="#a08890"/>
  <path d="M42.8 76 L57.7 76 L57 83.4 L42.8 83.4 Z" fill="#b04a58"/>
  <path d="M94.1 73 L106 74 L107.4 82.4 L94 82.4 Z" fill="#a84458"/>
  <path d="M60.2 17.4 L64.3 13.2 L74.3 12.4 L87.5 12.1 L90.8 12.4 L97.4 15.7 L99.1 20.7 L94.1 22.3 L92.5 30.6 L89.2 42.2 L77.6 45.5 L69.3 42.2 L64.3 30.6 L61.9 22.3 Z" fill="#f2eeea"/>
  <path d="M60.2 17.4 L64.3 13.2 L73 12.6 L74 22 L70 30.6 L64.3 30.6 L61.9 22.3 Z" fill="#7c5444"/>
  <path d="M90.8 12.4 L97.4 15.7 L99.1 20.7 L94.1 22.3 L91 18 Z" fill="#6a4038"/>
  <path d="M75.9 26 Q79 24.6 82.5 26 L81.6 29.6 L76.6 29.6 Z" fill="#2a2428"/>
  <path d="M71 36 Q78 40 86 36" fill="none" stroke="#7a5a5a" stroke-width="1"/>
  </g>
</svg>
<div class="t" style="left:6.4px;top:103.11px;font-size:7.6px;font-weight:bold;color:#2a2a2e">38451 Picture Frame Art The Dog 61x61cm ...</div>
<svg width="176" height="40" style="left:0;top:118px">
  <path d="M6.6 3.4 H11 L13.4 5.8 V11.2 H6.6 Z M11 3.4 V5.8 H13.4" fill="none" stroke="#7a7a82" stroke-width="0.9" stroke-linejoin="round"/>
  <path d="M59.2 3.6 H63.6 L66 7.4 L63.6 11.2 H59.2 L56.8 7.4 Z" fill="none" stroke="#7a7a82" stroke-width="0.9" stroke-linejoin="round"/>
</svg>
<div class="t" style="left:16.6px;top:120.59px;font-size:8.6px;color:#75757c">254 KB</div>
<div class="t" style="left:69.2px;top:120.59px;font-size:8.6px;color:#75757c">1</div>
<div class="abs" style="left:6px;top:141.3px;width:162.6px;height:1.4px;background:#e6e6ec"></div>
<div class="t" style="left:6.6px;top:156.22px;font-size:3.2px;color:#e83030;font-weight:bold;letter-spacing:0.15px">KARE</div>
<div class="t" style="left:21.2px;top:154.17px;font-size:6.2px;color:#56565c;letter-spacing:-0.12px">KARE SketchUp</div>
<svg width="176" height="20" style="left:0;top:150px">
  <rect x="139.4" y="3" width="9.4" height="9.4" fill="#4b4b55"/>
  <g fill="#fff"><rect x="142.5" y="3" width="3.2" height="3.1"/><rect x="139.4" y="6.1" width="3.1" height="3.2"/><rect x="145.7" y="6.1" width="3.1" height="3.2"/><rect x="142.5" y="9.3" width="3.2" height="3.1"/></g>
  <path d="M163.8 3 V10.4 M160.8 7.6 L163.8 10.6 L166.8 7.6" fill="none" stroke="#5a5a62" stroke-width="1"/>
  <path d="M158.6 9.6 V12.2 H169 V9.6" fill="none" stroke="#5a5a62" stroke-width="1"/>
</svg></div>
<div class="card" style="left:205.3px;top:35.0px;width:175.3px;height:172px"></div>
<div class="card" style="left:15.4px;top:222.0px;width:175.3px;height:172px"><svg width="176" height="115" style="left:0;top:0">
  <path d="M80 0 L176 0 L176 86 L100 64 Z" fill="#f9f9fa"/>
  <path d="M58.9 4.8 L63.5 11.9 L79.3 3.8 L76.7 24.7 L76.2 36.1 L85.1 45 L94 57.7 L99.1 67.9 L97.8 78.1 L91.5 84.5 L81.3 85.7 L73.7 88.3 L68.6 90.8 L64.8 88.3 L66 80.6 L61 75.6 L50.8 81.9 L46.9 80.6 L49.5 73 L52 67.9 L51.3 52.7 L52 43.8 L45.7 37.4 L40.6 29.8 L40.1 24.7 L44.4 18.3 L49.5 13.2 L54.6 10.7 Z" fill="#33322d" stroke="#33322d" stroke-width="0.8" stroke-linejoin="round"/>
  <path d="M44.4 18.3 L56 16 L62 26 L48 30 Z" fill="#3d3c36"/><path d="M62 26 L76.7 24.7 L70 38 Z" fill="#383732"/><path d="M52 43.8 L70 38 L64 56 Z" fill="#393833"/><path d="M76.2 36.1 L85.1 45 L72 52 Z" fill="#2a2925"/><path d="M64 56 L85 48 L82 66 Z" fill="#383732"/><path d="M82 66 L99.1 67.9 L91.5 84.5 Z" fill="#2b2a26"/><path d="M51.3 52.7 L64 56 L56 70 Z" fill="#2d2c28"/><path d="M44.4 18.3 L62 26 L48 30 L56 16 M62 26 L70 38 L52 43.8 M70 38 L85 48 L64 56 L82 66 L73.7 88.3 M82 66 L94 57.7 M56 70 L66 80.6" fill="none" stroke="#4c4b44" stroke-width="0.4" opacity="0.7"/>
  <path d="M146.3 0 L176 18 M146.3 0 L176 38.7" fill="none" stroke="#000" stroke-width="2.6"/>
</svg>
<div class="t" style="left:5.8px;top:102.42px;font-size:7.45px;font-weight:bold;color:#2a2a2e">DECORAÇÃO AI3Dprint - DOG geometrico</div>
<div class="abs" style="left:6px;top:141.3px;width:162.6px;height:1.4px;background:#e6e6ec"></div>
<div class="t" style="left:6.6px;top:156.22px;font-size:3.2px;color:#e83030;font-weight:bold;letter-spacing:0.15px">KARE</div>
<div class="t" style="left:21.2px;top:154.17px;font-size:6.2px;color:#56565c;letter-spacing:-0.12px">KARE SketchUp</div>
<svg width="176" height="20" style="left:0;top:150px">
  <rect x="139.4" y="3" width="9.4" height="9.4" fill="#4b4b55"/>
  <g fill="#fff"><rect x="142.5" y="3" width="3.2" height="3.1"/><rect x="139.4" y="6.1" width="3.1" height="3.2"/><rect x="145.7" y="6.1" width="3.1" height="3.2"/><rect x="142.5" y="9.3" width="3.2" height="3.1"/></g>
  <path d="M163.8 3 V10.4 M160.8 7.6 L163.8 10.6 L166.8 7.6" fill="none" stroke="#5a5a62" stroke-width="1"/>
  <path d="M158.6 9.6 V12.2 H169 V9.6" fill="none" stroke="#5a5a62" stroke-width="1"/>
</svg></div>
<div class="card" style="left:205.3px;top:222.0px;width:175.3px;height:172px"></div></div>
<!--/PANEL-->

<!--STATUS-->
<div class="abs" style="left:711px;top:540px;width:111px;height:18.4px;background:#656565"></div>
<div class="t" style="left:744.2px;top:546.74px;font-size:7.3px;color:#e9e9e9">Upgrade Now</div>
<div id="status"></div>
<svg width="825" height="20" style="left:0;top:560px">
  <circle cx="11.1" cy="10" r="6.1" fill="none" stroke="#1d4a7c" stroke-width="1.3"/>
  <path d="M9.2 8.2 Q9.2 6.2 11.1 6.2 Q13 6.2 13 8 Q13 9.2 11.6 9.8 Q11.1 10.1 11.1 11.2" fill="none" stroke="#1d4a7c" stroke-width="1.2"/>
  <circle cx="11.1" cy="13.2" r="0.75" fill="#1d4a7c"/>
  <circle cx="32.8" cy="10" r="6.1" fill="none" stroke="#1d4a7c" stroke-width="1.3"/>
  <ellipse cx="32.8" cy="10" rx="2.6" ry="6" fill="none" stroke="#1d4a7c" stroke-width="1"/>
  <path d="M27 8 H38.6 M27 12 H38.6" stroke="#1d4a7c" stroke-width="0.9"/>
  <path d="M51 14.4 H49.6 Q48 14.4 48 12.8 V5.2 Q48 3.6 49.6 3.6 H60.4 Q62 3.6 62 5.2 V12.8 Q62 14.4 60.4 14.4 H59" fill="none" stroke="#2d5a8a" stroke-width="1"/>
  <path d="M53.4 17.6 L51.4 13.6 Q51 12.2 52.4 12.6 L53.6 13.8 V7.2 Q53.6 6 54.8 6 Q56 6 56 7.2 V11 L59.2 11.6 Q60.6 12 60.4 13.4 L59.8 17.6" fill="#f1f1f6" stroke="#2d5a8a" stroke-width="1"/>
  <rect x="708" y="3.6" width="95" height="12.8" fill="#fff"/>
  <g transform="translate(815.6 10.1)">
    <path d="M0 -7 L6.2 -3.6 L6.2 3.6 L0 7 L-6.2 3.6 L-6.2 -3.6 Z" fill="#1a62b4" stroke="#1a62b4" stroke-width="0.6" stroke-linejoin="round"/>
    <path d="M-7 -1.9 H-0.8 M-7 0.7 H-0.8 M-7 3.3 H-0.8" stroke="#f1f1f6" stroke-width="0.9"/>
    <path d="M-0.6 -4.4 V7.2" stroke="#f1f1f6" stroke-width="0.9"/>
    <path d="M-4 -4.6 L0.4 -4.6 L3.9 -2.6 V2.8 L0.6 4.8" fill="none" stroke="#f1f1f6" stroke-width="0.9"/>
    <path d="M0.6 -2.2 L1.7 -1.4 V1.8 L0.6 2.4" fill="none" stroke="#8fb8e4" stroke-width="0.9"/>
  </g>
</svg>
<div class="abs" style="left:0;top:576.7px;width:1.2px;height:2.2px;background:#000"></div><div class="abs" style="left:824px;top:576.8px;width:1px;height:2.2px;background:#000"></div>
<div class="t" style="left:69.8px;top:565.63px;font-size:9.1px;color:#333338">Click something to begin moving it. | Option = Cycle Copy/Stamp/Move. | Command = Toggle Autofold. | Arrow Keys = Toggle Lock</div>
<div class="t" style="left:670.4px;top:565.57px;font-size:8.8px;color:#333338">Distance</div>
<div class="t" style="left:712.4px;top:565.54px;font-size:9px;color:#333338">6 5/16&quot;</div>
<!--/STATUS-->
</body></html>
